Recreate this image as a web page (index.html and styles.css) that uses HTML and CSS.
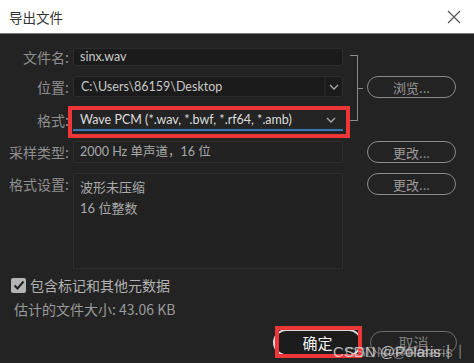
FILE: index.html
```html
<!DOCTYPE html>
<html>

<head>
    <title>导出文件</title>
    <meta charset="utf-8">
    <meta name="viewport" content="width=device-width, initial-scale=1.0">
    <link rel="stylesheet" href="styles.css">
</head>

<body>
    <header class="titlebar">
        <h1>导出文件</h1>
        <svg class="luk" width="14" height="14" viewBox="0 0 14 14">
            <path d="M1 1 L13 13 M13 1 L1 13" stroke="#555" stroke-width="1.2" fill="none" />
        </svg>
    </header>

    <main class="dialog">
        <section class="form">
            <label class="lbl r1">文件名:</label>
            <div class="felt r1">sinx.wav</div>

            <div class="klamme"><span></span></div>

            <label class="lbl r2">位置:</label>
            <div class="felt drop r2">
                <span class="værdi">C:\Users\86159\Desktop</span>
                <span class="pil"><svg width="10" height="6" viewBox="0 0 10 6"><path d="M1 1 L5 5 L9 1" stroke="#aaa" stroke-width="1.3" fill="none" /></svg></span>
            </div>
            <button class="knap browse r2">浏览...</button>

            <label class="lbl format r3">格式:</label>
            <div class="felt valg r3">
                <span class="værdi">Wave PCM (*.wav, *.bwf, *.rf64, *.amb)</span>
                <svg width="10" height="6" viewBox="0 0 10 6"><path d="M1 1 L5 5 L9 1" stroke="#aaa" stroke-width="1.3" fill="none" /></svg>
            </div>

            <label class="lbl r4">采样类型:</label>
            <div class="felt flad r4">2000 Hz 单声道，16 位</div>
            <button class="knap skift r4">更改...</button>

            <label class="lbl top r5">格式设置:</label>
            <div class="felt flad tekst r5">波形未压缩<br>16 位整数</div>
            <button class="knap skift top r5">更改...</button>
        </section>

        <div class="check">
            <span class="boks"><svg width="12" height="11" viewBox="0 0 12 11"><path d="M1.5 5.5 L4.5 8.5 L10.5 1.5" stroke="#222" stroke-width="2" fill="none" /></svg></span>
            包含标记和其他元数据
        </div>
        <p class="stoerrelse">估计的文件大小: 43.06 KB</p>

        <footer class="bund">
            <button class="knap ok">确定</button>
            <button class="knap annuller">取消</button>
        </footer>
    </main>

    <div class="vandmaerke">
        <span class="a">CSDN @Polaris丨</span>
        <span class="b">CSDN @Polaris丨</span>
    </div>
</body></html>
```

FILE: styles.css
```css
* {
    box-sizing: border-box;
}

body {
    margin: 0;
    width: 474px;
    height: 363px;
    overflow: hidden;
    background: #232323;
    font-family: Lato, "Noto Sans CJK SC", sans-serif;
    font-size: 14px;
    position: relative;
}

.titlebar {
    height: 34px;
    background: #fff;
    border-bottom: 1px solid #7a7a7a;
    display: flex;
    align-items: center;
    justify-content: space-between;
    padding: 0 13px 0 9px;
}

.titlebar h1 {
    margin: 0;
    font-size: 13.5px;
    font-weight: normal;
    color: #333;
    font-family: "Noto Sans CJK SC", sans-serif;
}

.dialog {
    padding: 14px 0 0 0;
}

.form {
    display: grid;
    grid-template-columns: 69px 270px 16px 89px;
    grid-template-rows: 18px 21px 24px 22px 96px;
    column-gap: 4px;
    row-gap: 10px;
}

.r1 { grid-row: 1; }
.r2 { grid-row: 2; }
.r3 { grid-row: 3; }
.r4 { grid-row: 4; }
.r5 { grid-row: 5; }

.lbl {
    grid-column: 1;
    color: #8f8f8f;
    text-align: right;
    font-family: "Noto Sans CJK SC", sans-serif;
    font-size: 14px;
    line-height: 18px;
    align-self: center;
    white-space: nowrap;
}

.lbl.format {
    align-self: end;
    padding-bottom: 2px;
}

.lbl.top {
    align-self: start;
    padding-top: 2px;
}

.felt {
    grid-column: 2;
    background: #1b1b1b;
    border: 1px solid #2c2c2c;
    border-radius: 3px;
    color: #c9c9c9;
    padding: 0 6px;
    display: flex;
    align-items: center;
    font-size: 12.5px;
    line-height: 16px;
    white-space: nowrap;
}

.drop {
    padding-right: 0;
    justify-content: space-between;
}

.drop .værdi {
    padding-left: 1px;
}

.pil {
    width: 18px;
    height: 100%;
    border-left: 2px solid #232323;
    display: flex;
    align-items: center;
    justify-content: center;
}

.valg {
    align-self: end;
    height: 21px;
    position: relative;
    justify-content: space-between;
    background: #242424;
    border: none;
    border-bottom: 2px solid #3b78b5;
    border-radius: 0;
    color: #dcdcdc;
    padding: 0 7px 0 7px;
}

.valg::after {
    content: "";
    position: absolute;
    left: -5px;
    right: -7px;
    top: -4px;
    bottom: -9px;
    border: 4px solid #ee3538;
}

.flad {
    background: #222;
    border: 1px solid #2e2e2e;
    border-radius: 0;
    color: #a9a9a9;
}

.tekst {
    align-items: flex-start;
    padding-top: 3px;
    font-size: 13px;
    line-height: 21px;
}

.klamme {
    grid-column: 3;
    grid-row: 1 / 4;
    display: flex;
    align-items: stretch;
    padding: 7px 0 10px 3px;
}

.klamme span {
    width: 8px;
    border: 1.5px solid #8a8a8a;
    border-left: none;
    position: relative;
}

.klamme span::after {
    content: "";
    position: absolute;
    right: -6px;
    top: 50%;
    width: 5px;
    border-top: 1.5px solid #8a8a8a;
}

.knap {
    background: transparent;
    border: 1.5px solid #8a8a8a;
    border-radius: 12px;
    color: #9a9a9a;
    font-family: "Noto Sans CJK SC", sans-serif;
    font-size: 13px;
    padding: 0;
    height: 22px;
}

.browse {
    grid-column: 4;
}

.skift {
    grid-column: 4;
}

.skift.top {
    align-self: start;
}

.check {
    display: flex;
    align-items: center;
    gap: 4px;
    margin: 6px 0 0 11px;
    color: #b2b2b2;
    font-family: "Noto Sans CJK SC", sans-serif;
    font-size: 14px;
}

.boks {
    width: 15px;
    height: 15px;
    border-radius: 2px;
    background: #b4b4b4;
    display: flex;
    align-items: center;
    justify-content: center;
}

.stoerrelse {
    margin: 4px 0 0 14px;
    color: #9a9a9a;
    font-family: "Noto Sans CJK SC", sans-serif;
    font-size: 14px;
}

.bund {
    display: flex;
    justify-content: flex-end;
    gap: 8px;
    margin: 10px 17px 0 0;
    align-items: center;
}

.ok {
    width: 89px;
    height: 27px;
    border-radius: 14px;
    border: 2px solid #d8d8d8;
    background: #1c1c1c;
    color: #f2f2f2;
    font-size: 15px;
    position: relative;
}

.ok::after {
    content: "";
    position: absolute;
    left: 0;
    top: -5px;
    width: 79px;
    bottom: -4px;
    border: 4px solid #ee3538;
}

.annuller {
    width: 87px;
    height: 23px;
    border-color: #6e6e6e;
    color: #7f7f7f;
    font-size: 15px;
}

.vandmaerke {
    position: absolute;
    left: 333px;
    top: 343px;
    font-family: "Liberation Sans", sans-serif;
    font-size: 15px;
    color: rgba(235, 235, 235, 0.75);
    white-space: nowrap;
}

.vandmaerke span {
    position: absolute;
    top: 0;
}

.vandmaerke .a {
    left: 0;
}

.vandmaerke .b {
    left: 12px;
    color: rgba(200, 200, 200, 0.55);
}
```
